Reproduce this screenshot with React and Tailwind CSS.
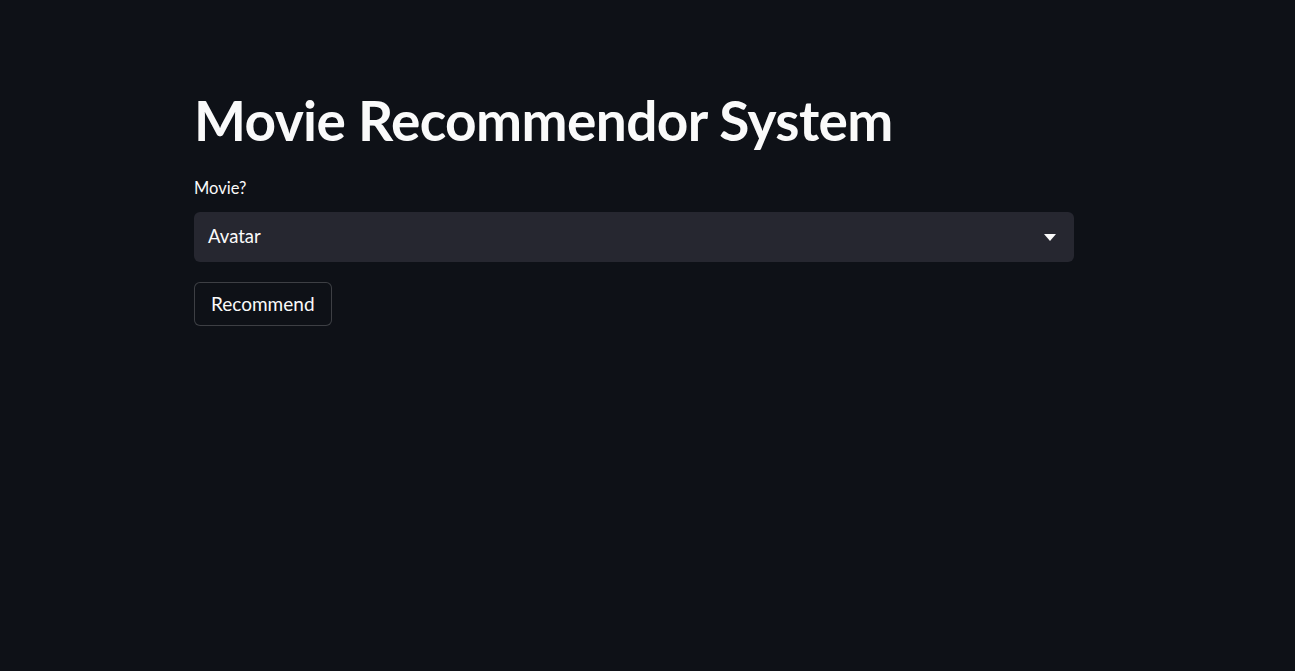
export default function App() {
  const font = { fontFamily: "Lato, 'Noto Sans', sans-serif" };
  return (
    <div className="min-h-screen w-full bg-[#0e1117] text-[#fafafa]" style={font}>
      <main className="ml-[194px] w-[880px] pt-[86px] flex flex-col">
        <h1 className="text-[55px] font-bold leading-[68px] tracking-[-0.6px]">Movie Recommendor System</h1>
        <label className="mt-[22px] text-[16.5px] leading-[24px]">Movie?</label>
        <div className="mt-[12px] h-[50px] rounded-[6px] bg-[#262730] flex items-center justify-between pl-[14px] pr-[18px]">
          <span className="text-[18.5px]">Avatar</span>
          <svg width="12" height="7" viewBox="0 0 12 7" className="fill-[#fafafa]">
            <path d="M0 0h12L6 7z" />
          </svg>
        </div>
        <div className="mt-[20px]">
          <button className="h-[44px] px-[16px] rounded-[6px] border border-[#fafafa33] bg-[#0e1117] text-[19px] text-[#fafafa]">
            Recommend
          </button>
        </div>
      </main>
    </div>
  );
}
